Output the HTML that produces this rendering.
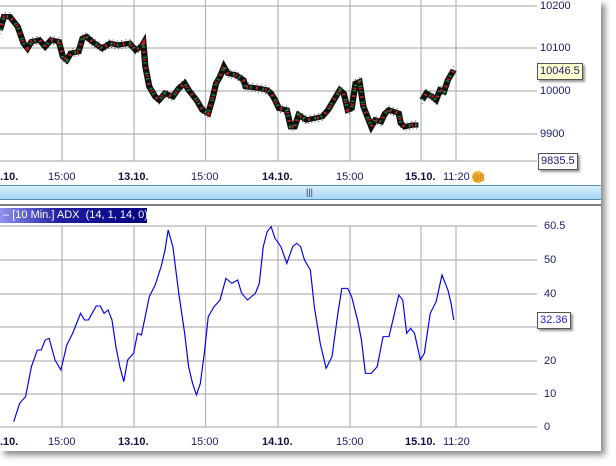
<!DOCTYPE html>
<html><head><style>
html,body{margin:0;padding:0;background:#fff;}
body{width:616px;height:466px;position:relative;overflow:hidden;font-family:"Liberation Sans",sans-serif;}
.t{position:absolute;font-size:11px;color:#1a1a6e;white-space:nowrap;}
.b{font-weight:bold;color:#101040;}
.box{position:absolute;background:#fff;border:1px solid #555;box-shadow:2px 2px 2px #999;font-size:11px;color:#1a1a6e;line-height:15px;padding:0 2px;}
</style></head><body>
<div style="position:absolute;left:0;top:0;width:601px;height:451px;background:#fff;box-shadow:4px 4px 6px #888;"></div>
<svg width="616" height="466" style="position:absolute;left:0;top:0">
<defs>
<polyline id="pr" fill="none" points="0,90 10,50 25,50 45,80 60,130 70,145 80,125 100,120 115,140 130,120 150,125 160,170 170,180 180,160 200,155 210,115 220,110 235,125 260,145 280,130 300,135 330,130 345,150 360,140 365,130 370,200 380,260 395,290 405,300 420,280 440,290 455,265 470,250 480,270 500,300 515,330 530,340 540,300 550,250 560,230 570,200 580,220 600,225 620,240 625,260 660,265 680,270 690,280 700,300 710,325 730,330 740,380 750,380 760,345 780,360 800,355 820,350 835,330 850,300 865,270 875,280 885,330 895,325 905,250 915,245 925,320 935,350 945,380 955,360 970,365 980,340 990,330 1015,340 1020,370 1030,380 1050,375 1065,375"/>
<polyline id="pr2" fill="none" points="1075,300 1085,280 1100,290 1110,300 1120,270 1130,275 1140,240 1155,210"/>
</defs>
<g stroke="#b4b4b4" stroke-width="1.2">
<line x1="62" y1="0" x2="62" y2="161"/><line x1="134" y1="0" x2="134" y2="161"/><line x1="205.5" y1="0" x2="205.5" y2="161"/><line x1="278" y1="0" x2="278" y2="161"/><line x1="350" y1="0" x2="350" y2="161"/><line x1="421" y1="0" x2="421" y2="161"/><line x1="456" y1="0" x2="456" y2="161"/>
<line x1="0" y1="6" x2="537" y2="6"/><line x1="0" y1="48" x2="537" y2="48"/><line x1="0" y1="91" x2="537" y2="91"/><line x1="0" y1="134" x2="537" y2="134"/><line x1="0" y1="161" x2="537" y2="161"/>
<line x1="62" y1="226" x2="62" y2="427"/><line x1="134" y1="226" x2="134" y2="427"/><line x1="205.5" y1="226" x2="205.5" y2="427"/><line x1="278" y1="226" x2="278" y2="427"/><line x1="350" y1="226" x2="350" y2="427"/><line x1="421" y1="226" x2="421" y2="427"/><line x1="456" y1="226" x2="456" y2="427"/>
<line x1="0" y1="226" x2="537" y2="226"/><line x1="0" y1="260" x2="537" y2="260"/><line x1="0" y1="294" x2="537" y2="294"/><line x1="0" y1="327" x2="537" y2="327"/><line x1="0" y1="361" x2="537" y2="361"/><line x1="0" y1="394" x2="537" y2="394"/><line x1="0" y1="427" x2="537" y2="427"/>
</g>
<g transform="scale(0.3929,0.3333)">
<g transform="translate(0,-12)"><use href="#pr" stroke="#111" stroke-width="2.5" stroke-dasharray="2 9"/><use href="#pr2" stroke="#111" stroke-width="2.5" stroke-dasharray="2 9"/></g>
<g transform="translate(0,12)"><use href="#pr" stroke="#111" stroke-width="2.5" stroke-dasharray="2 7"/><use href="#pr2" stroke="#111" stroke-width="2.5" stroke-dasharray="2 7"/></g>
<use href="#pr" stroke="#111" stroke-width="16"/>
<use href="#pr2" stroke="#111" stroke-width="16"/>
<use href="#pr" stroke="#1a8a3a" stroke-width="9" stroke-dasharray="4 12"/>
<use href="#pr" stroke="#e0101a" stroke-width="9" stroke-dasharray="4 20" stroke-dashoffset="9"/>
<use href="#pr2" stroke="#1a8a3a" stroke-width="9" stroke-dasharray="4 12"/>
<use href="#pr2" stroke="#e0101a" stroke-width="9" stroke-dasharray="4 20" stroke-dashoffset="9"/>
</g>
<g transform="translate(0,220) scale(0.3929,0.3333)">
<polyline fill="none" stroke="#0000ee" stroke-width="3" points="35,605 50,550 65,530 80,440 95,390 105,390 115,360 125,355 140,420 155,450 170,375 185,340 205,280 215,300 225,300 245,258 255,258 265,280 275,270 285,300 295,380 305,440 315,485 325,420 340,400 350,340 360,345 380,230 395,195 410,140 420,90 428,30 440,80 455,220 470,340 480,440 490,490 500,525 510,490 520,400 530,290 545,260 560,240 575,175 590,190 605,180 615,220 630,240 640,230 650,220 660,190 670,80 680,35 690,20 700,55 715,80 730,130 745,80 755,70 765,80 775,120 790,150 800,260 815,370 830,445 845,410 860,280 870,205 885,205 895,230 910,300 920,360 930,460 945,460 960,440 975,350 990,350 1000,300 1015,225 1025,240 1035,340 1045,325 1055,340 1070,420 1080,400 1095,280 1110,245 1125,165 1140,210 1148,250 1155,300"/>
</g>
<line x1="0" y1="205" x2="601" y2="205" stroke="#555" stroke-width="1.5"/>
<circle cx="478" cy="177" r="6" fill="#f5b030"/>
<text x="473.5" y="181" font-size="10" fill="#c08020" font-family="Liberation Sans">98</text>
</svg>
<div style="position:absolute;left:0;top:185px;width:601px;height:13px;background:linear-gradient(#d8eefb,#a6d6f2);border-top:1px solid #5a8fb0;border-bottom:1px solid #5a8fb0;"></div>
<div style="position:absolute;left:306px;top:187px;font-size:9px;color:#336;">|||</div>
<div style="position:absolute;left:0;top:208px;width:147px;height:15px;background:linear-gradient(90deg,#9090f0,#2020a0 40%,#000080);color:#fff;font-size:11px;line-height:15px;white-space:nowrap;overflow:hidden;">&nbsp;– [10 Min.] ADX &nbsp;(14, 1, 14, 0)</div>
<div class="t" style="left:540px;top:0">10200</div>
<div class="t" style="left:540px;top:42px">10100</div>
<div class="t" style="left:540px;top:85px">10000</div>
<div class="t" style="left:540px;top:128px">9900</div>
<div class="box" style="left:537px;top:63px;background:#ffffd0">10046.5</div>
<div class="box" style="left:538px;top:153px">9835.5</div>
<div class="t b" style="left:0;top:171px">.10.</div>
<div class="t" style="left:48px;top:171px">15:00</div>
<div class="t b" style="left:118px;top:171px">13.10.</div>
<div class="t" style="left:191px;top:171px">15:00</div>
<div class="t b" style="left:262px;top:171px">14.10.</div>
<div class="t" style="left:336px;top:171px">15:00</div>
<div class="t b" style="left:405px;top:171px">15.10.</div>
<div class="t" style="left:443px;top:171px">11:20</div>
<div class="t" style="left:544px;top:220px">60.5</div>
<div class="t" style="left:544px;top:254px">50</div>
<div class="t" style="left:544px;top:288px">40</div>
<div class="t" style="left:544px;top:321px">30</div>
<div class="t" style="left:544px;top:355px">20</div>
<div class="t" style="left:544px;top:388px">10</div>
<div class="t" style="left:544px;top:421px">0</div>
<div class="box" style="left:537px;top:312px;color:#2020d0">32.36</div>
<div class="t b" style="left:0;top:436px">.10.</div>
<div class="t" style="left:48px;top:436px">15:00</div>
<div class="t b" style="left:118px;top:436px">13.10.</div>
<div class="t" style="left:191px;top:436px">15:00</div>
<div class="t b" style="left:262px;top:436px">14.10.</div>
<div class="t" style="left:336px;top:436px">15:00</div>
<div class="t b" style="left:405px;top:436px">15.10.</div>
<div class="t" style="left:443px;top:436px">11:20</div>
</body></html>
